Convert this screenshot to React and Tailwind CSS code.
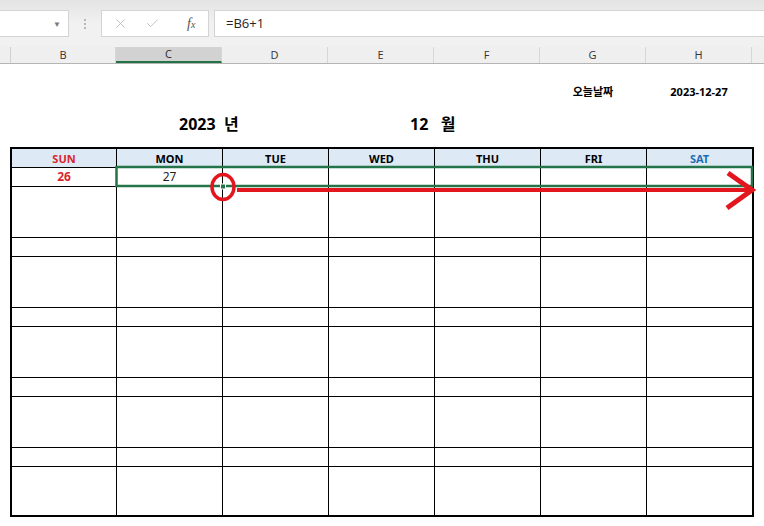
import { X, Check } from 'lucide-react'

const COLS = ['B', 'C', 'D', 'E', 'F', 'G', 'H']
const DAYS = [
  { label: 'SUN', cls: 'text-[#d9262b]' },
  { label: 'MON', cls: 'text-black' },
  { label: 'TUE', cls: 'text-black' },
  { label: 'WED', cls: 'text-black' },
  { label: 'THU', cls: 'text-black' },
  { label: 'FRI', cls: 'text-black' },
  { label: 'SAT', cls: 'text-[#1d6fb3]' },
]
// heights of the body rows (each includes its 1px top line)
const ROWS = [19, 51, 19, 51, 19, 51, 19, 51, 19, 49]

function FormulaBar() {
  return (
    <div className="h-[47px] bg-gradient-to-b from-[#e4e4e4] via-[#f1f1f1] to-[#f1f1f1] pt-[10px] flex items-start">
      {/* Name box */}
      <div className="w-[69px] h-[27px] bg-white border border-[#d4d4d4] border-l-0 flex items-center justify-end pr-[7px]">
        <span className="text-[8px] text-[#7a7a7a] leading-none">▼</span>
      </div>
      {/* grip dots */}
      <div className="w-[32px] h-[27px] flex flex-col items-center justify-center gap-[2px]">
        <span className="w-[2px] h-[2px] bg-[#b8b8b8]" />
        <span className="w-[2px] h-[2px] bg-[#b8b8b8]" />
        <span className="w-[2px] h-[2px] bg-[#b8b8b8]" />
      </div>
      {/* cancel / enter / fx */}
      <div className="w-[108px] h-[27px] bg-white border border-[#d4d4d4] flex items-center">
        <X size={15} strokeWidth={1.3} className="text-[#b4b4b4] ml-[11px]" />
        <Check size={15} strokeWidth={1.3} className="text-[#b4b4b4] ml-[17px]" />
        <span className="ml-[27px] font-['Liberation_Serif',serif] italic text-[14px] text-[#555] leading-none">
          f<span className="text-[10px]">x</span>
        </span>
      </div>
      {/* formula */}
      <div className="ml-[5px] flex-1 h-[27px] bg-white border border-[#d4d4d4] border-r-0 flex items-center pl-[11px]">
        <span className="font-['Open_Sans',sans-serif] text-[13px] text-[#262626]">=B6+1</span>
      </div>
    </div>
  )
}

function ColumnHeaders() {
  return (
    <div className="h-[17px] bg-[#efefef] border-b border-[#b4b4b4] flex font-['Open_Sans',sans-serif] text-[11px] text-[#333]">
      <div className="w-[11px] border-r border-[#d0d0d0]" />
      {COLS.map((c, i) => (
        <div
          key={c}
          className={`flex items-center justify-center border-r border-[#d6d6d6] ${i === 0 ? 'w-[105px]' : 'w-[106px]'} ${c === 'C' ? 'bg-[#d2d2d2] border-b-2 border-b-[#217346] text-[#2a2a2a]' : ''}`}
        >
          {c}
        </div>
      ))}
      <div className="flex-1" />
    </div>
  )
}

function Calendar() {
  return (
    <div className="ml-[10px] w-[744px] border-2 border-black font-['Noto_Sans','Noto_Sans_CJK_KR',sans-serif] text-[11px]">
      <div className="grid grid-cols-[104px_repeat(6,106px)] h-[18px] bg-[#dde9f5]">
        {DAYS.map((d, i) => (
          <div key={d.label} className={`flex items-center justify-center font-bold leading-none ${d.cls} ${i ? 'border-l border-black' : ''}`}>
            {d.label}
          </div>
        ))}
      </div>
      {ROWS.map((h, r) => (
        <div key={r} className="grid grid-cols-[104px_repeat(6,106px)] border-t border-black" style={{ height: h }}>
          {DAYS.map((d, i) => (
            <div key={d.label} className={`flex items-center justify-center leading-none ${i ? 'border-l border-black' : ''}`}>
              {r === 0 && i === 0 && <span className="font-bold text-[#d9262b] text-[12px]">26</span>}
              {r === 0 && i === 1 && <span className="text-[#222] text-[12px]">27</span>}
            </div>
          ))}
        </div>
      ))}
    </div>
  )
}

function Sheet() {
  return (
    <div className="pt-[19px] font-['Noto_Sans','Noto_Sans_CJK_KR',sans-serif]">
      <div className="flex h-[18px] items-center text-[11px] font-bold text-black">
        <div className="w-[540px]" />
        <div className="w-[106px] text-center">오늘날짜</div>
        <div className="w-[106px] text-center">2023-12-27</div>
      </div>
      <div className="mt-[13px] flex h-[20px] items-center text-[16px] font-bold text-black">
        <div className="pl-[179px] w-[410px]">2023&nbsp;&nbsp;년</div>
        <div>12&nbsp;&nbsp;&nbsp;월</div>
      </div>
      <div className="mt-[13px]">
        <Calendar />
      </div>
    </div>
  )
}

function Overlay() {
  return (
    <svg className="absolute inset-0 pointer-events-none" width="764" height="526" viewBox="0 0 764 526">
      <rect x="116.5" y="167" width="635.5" height="19" fill="none" stroke="#24744a" strokeWidth="2.5" />
      <rect x="220.5" y="184" width="5" height="5" fill="#24744a" stroke="white" strokeWidth="1" />
      <ellipse cx="223" cy="187" rx="11" ry="12.5" fill="none" stroke="#e3161d" strokeWidth="3.5" />
      <line x1="237" y1="190" x2="750" y2="190" stroke="#e3161d" strokeWidth="4" />
      <polyline points="728,173 752,190 727,208" fill="none" stroke="#e3161d" strokeWidth="5" strokeLinejoin="miter" />
    </svg>
  )
}

export default function App() {
  return (
    <div className="relative w-[764px] h-[526px] overflow-hidden bg-white">
      <FormulaBar />
      <ColumnHeaders />
      <Sheet />
      <Overlay />
    </div>
  )
}
